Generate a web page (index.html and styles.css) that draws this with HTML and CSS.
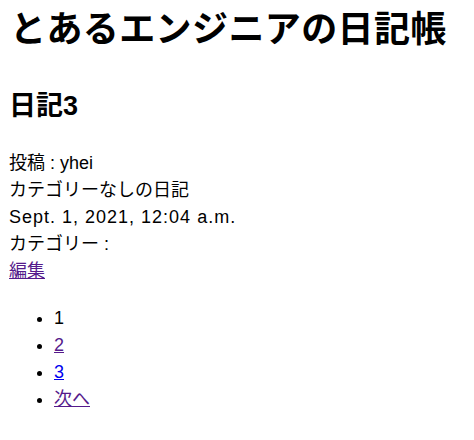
FILE: index.html
```html
<!DOCTYPE html>
<html lang="ja">
<head>
<meta charset="utf-8">
<title>とあるエンジニアの日記帳</title>
<link rel="stylesheet" href="styles.css">
</head>
<body>
<h1 class="site-title">とあるエンジニアの日記帳</h1>
<h2 class="post-title">日記3</h2>
<div class="post-meta">
  <div class="line">投稿 : yhei</div>
  <div class="line">カテゴリーなしの日記</div>
  <div class="line date">Sept. 1, 2021, 12:04 a.m.</div>
  <div class="line">カテゴリー :</div>
  <div class="line"><a class="link visited" href="#">編集</a></div>
</div>
<ul class="pager">
  <li>1</li>
  <li><a class="link visited" href="#">2</a></li>
  <li><a class="link" href="#">3</a></li>
  <li><a class="link visited" href="#">次へ</a></li>
</ul>
</body>
</html>
```
FILE: styles.css
```css
html, body {
  background: #fff;
}
body {
  margin: 0 9px;
  font-family: "Liberation Sans", "Noto Sans CJK JP", sans-serif;
  font-size: 18px;
  line-height: 27px;
  color: #000;
}
.site-title {
  font-size: 36px;
  line-height: 54px;
  font-weight: bold;
  letter-spacing: 0.4px;
  margin: 3px 0 0 1px;
}
.post-title {
  font-size: 27px;
  line-height: 40px;
  font-weight: bold;
  margin: 29px 0 0;
}
.post-meta {
  margin-top: 24px;
}
.date {
  letter-spacing: 1px;
}
.pager {
  margin: 20px 0 0;
  padding-left: 45px;
}
.link {
  color: #0000ee;
  text-decoration: underline;
}
.link.visited {
  color: #551a8b;
}
```
